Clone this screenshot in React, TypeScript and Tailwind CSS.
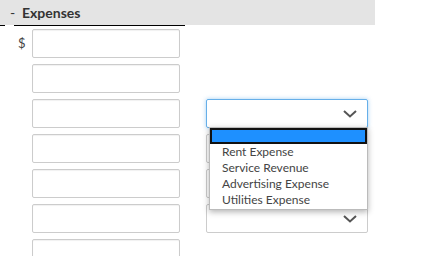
import React from "react";

const rows = [
  { select: false },
  { select: false },
  { select: true, focused: true },
  { select: true },
  { select: true },
  { select: true },
  { select: false },
];

const options = ["Rent Expense", "Service Revenue", "Advertising Expense", "Utilities Expense"];

function Chevron() {
  return (
    <svg width="14" height="8" viewBox="0 0 14 8" className="text-[#555]">
      <path d="M1 1l6 5.5L13 1" fill="none" stroke="currentColor" strokeWidth="2" />
    </svg>
  );
}

export default function App() {
  return (
    <div className="relative h-[256px] w-[442px] overflow-hidden bg-white font-['Lato','Liberation_Sans',sans-serif]">
      <div className="flex h-[25px] w-[375px] items-center bg-[#e4e4e4] pl-[10px] text-[14px] text-[#333]">
        <span className="w-[12px]">-</span>
        <span className="font-bold">Expenses</span>
      </div>
      <div className="flex h-px">
        <span className="w-[5px] bg-black" />
        <span className="ml-[9px] w-[171px] bg-black" />
      </div>
      <div className="mt-[3px] flex flex-col gap-[6px]">
        {rows.map((row, i) => (
          <div key={i} className="flex h-[29px] items-center">
            <span className="w-[32px] pl-[18px] text-[13px] text-[#444]">{i === 0 ? "$" : ""}</span>
            <div className="h-[29px] w-[148px] rounded-[2px] border border-[#ccc] shadow-[inset_0_1px_1px_rgba(0,0,0,0.06)]" />
            {row.select && (
              <div
                className={
                  "ml-[26px] flex h-[29px] w-[162px] items-center justify-end rounded-[2px] border pr-[10px] " +
                  (row.focused
                    ? "border-[#66afe9] shadow-[0_0_4px_rgba(102,175,233,0.6)]"
                    : "border-[#ccc]")
                }
              >
                <Chevron />
              </div>
            )}
          </div>
        ))}
      </div>
      <div className="absolute left-[209px] top-[127px] w-[159px] border border-[#bbb] bg-white pb-px text-[12px] leading-[16px] text-[#444] shadow-[0_2px_6px_rgba(0,0,0,0.3)]">
        <div className="h-[16px] border-2 border-[#111] bg-[#1e90ff]" />
        {options.map((o) => (
          <div key={o} className="h-[16px] pl-[12px]">
            {o}
          </div>
        ))}
      </div>
    </div>
  );
}
